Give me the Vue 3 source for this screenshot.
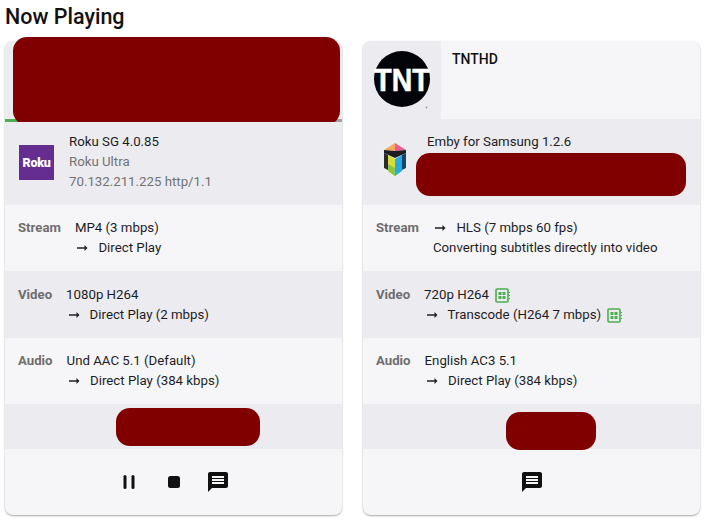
<script setup>
const cards = [
  {
    id: 'roku',
    rows: [
      { label: 'Stream', lines: [{ text: 'MP4 (3 mbps)' }, { arrow: true, text: 'Direct Play' }] },
      { label: 'Video', lines: [{ text: '1080p H264' }, { arrow: true, text: 'Direct Play (2 mbps)' }] },
      { label: 'Audio', lines: [{ text: 'Und AAC 5.1 (Default)' }, { arrow: true, text: 'Direct Play (384 kbps)' }] }
    ]
  },
  {
    id: 'emby',
    rows: [
      { label: 'Stream', lines: [{ arrow: true, text: 'HLS (7 mbps 60 fps)' }, { text: 'Converting subtitles directly into video' }] },
      { label: 'Video', lines: [{ text: '720p H264', chip: true }, { arrow: true, text: 'Transcode (H264 7 mbps)', chip: true }] },
      { label: 'Audio', lines: [{ text: 'English AC3 5.1' }, { arrow: true, text: 'Direct Play (384 kbps)' }] }
    ]
  }
]
</script>

<template>
  <div class="page">
    <h1 class="title">Now Playing</h1>
    <div class="grid">
      <div v-for="card in cards" :key="card.id" class="card">
        <template v-if="card.id === 'roku'">
          <div class="poster-wide"></div>
          <div class="progress"><div class="progress-fill"></div></div>
          <div class="redact redact-top"></div>
        </template>
        <div v-else class="head">
          <div class="poster">
            <svg width="56" height="62" viewBox="0 0 56 62">
              <circle cx="28" cy="28" r="28" fill="#03030a" />
              <text transform="translate(0.3 40) scale(1 1.07)" class="tnt">TNT</text>
              <circle cx="52.5" cy="56.5" r="0.9" fill="#999" />
            </svg>
          </div>
          <div class="channel">TNTHD</div>
        </div>

        <div class="device" :class="card.id">
          <div class="device-icon">
            <div v-if="card.id === 'roku'" class="roku-logo">Roku</div>
            <svg v-else width="26" height="36" viewBox="0 0 26 36">
              <polygon points="13,0 26,8 26,28 13,36 0,28 0,8" fill="#e9eef0" />
              <polygon points="13,1 13,9 2,8" fill="#f6a95a" />
              <polygon points="13,1 24,8 13,9" fill="#ee5c8e" />
              <polygon points="2,8 13,9 24,8 24,11 13,16 2,11" fill="#1d1d22" />
              <polygon points="2,11 6,13 6,28 2,26" fill="#2a2a30" />
              <polygon points="24,11 20,13 20,28 24,26" fill="#14466e" />
              <polygon points="6,13 13,17 13,34 6,29" fill="#d7de36" />
              <polygon points="6,22 13,26 13,34 6,29" fill="#8cc63f" />
              <polygon points="20,13 13,17 13,34 20,29" fill="#29abe2" />
            </svg>
          </div>
          <div class="device-text">
            <div v-if="card.id === 'roku'" class="line">Roku SG 4.0.85</div>
            <div v-else class="line">Emby for Samsung 1.2.6</div>
            <template v-if="card.id === 'roku'">
              <div class="line muted">Roku Ultra</div>
              <div class="line muted">70.132.211.225 http/1.1</div>
            </template>
          </div>
          <div v-if="card.id === 'emby'" class="redact redact-device"></div>
        </div>

        <div v-for="row in card.rows" :key="row.label" class="row">
          <div class="label">{{ row.label }}</div>
          <div class="value">
            <div v-for="line in row.lines" :key="line.text" class="line" :class="{ 'with-arrow': line.arrow }">
              <svg v-if="line.arrow" class="arrow" width="12" height="10" viewBox="0 0 12 10">
                <path d="M1 4.2h7.5V2l3 3-3 3V5.8H1z" fill="#222" />
              </svg>
              <span>{{ line.text }}</span>
              <svg v-if="line.chip" class="chip" width="15" height="15" viewBox="0 0 15 15">
                <rect x="1" y="1" width="12" height="13" rx="1" fill="none" stroke="#4caf50" stroke-width="1.6" />
                <path d="M3.5 4h3v3h-3zM7.5 4h3v3h-3zM3.5 8h3v3h-3zM7.5 8h3v3h-3z" fill="#4caf50" />
                <path d="M13.5 4.5H15M13.5 7.5H15M13.5 10.5H15" stroke="#4caf50" stroke-width="1" />
              </svg>
            </div>
          </div>
        </div>

        <div class="user">
          <div class="redact" :class="card.id === 'roku' ? 'redact-user-a' : 'redact-user-b'"></div>
        </div>

        <div class="controls">
          <template v-if="card.id === 'roku'">
            <button class="ctl">
              <svg width="24" height="24" viewBox="0 0 24 24" fill="#111">
                <rect x="6.5" y="5" width="3" height="14" rx="1.5" />
                <rect x="14.5" y="5" width="3" height="14" rx="1.5" />
              </svg>
            </button>
            <button class="ctl">
              <svg width="24" height="24" viewBox="0 0 24 24" fill="#111">
                <rect x="6" y="6" width="12" height="12" rx="2.5" />
              </svg>
            </button>
          </template>
          <button class="ctl">
            <svg width="24" height="24" viewBox="0 0 24 24" fill="#111">
              <path d="M20 2H4c-1.1 0-1.99.9-1.99 2L2 22l4-4h14c1.1 0 2-.9 2-2V4c0-1.1-.9-2-2-2zm-2 12H6v-2h12v2zm0-3H6V9h12v2zm0-3H6V6h12v2z" />
            </svg>
          </button>
        </div>
      </div>
    </div>
  </div>
</template>

<style scoped>
.page {
  width: 716px;
  height: 528px;
  padding: 5px 16px 0 5px;
  box-sizing: border-box;
  background: #fff;
  font-family: Roboto, "Liberation Sans", sans-serif;
  color: #1d1d1f;
  overflow: hidden;
}

.title {
  margin: 0 0 12px;
  font-size: 21.5px;
  line-height: 24px;
  font-weight: 500;
  color: #111;
}

.grid {
  display: grid;
  grid-template-columns: 337px 337px;
  column-gap: 21px;
}

.card {
  position: relative;
  height: 474px;
  display: flex;
  flex-direction: column;
  background: #f6f6f9;
  border-radius: 8px;
  box-shadow: 0 1px 2px rgba(0, 0, 0, 0.35);
}

.poster-wide {
  height: 78px;
  background: #ecebf0;
  border-radius: 8px 8px 0 0;
}

.progress {
  height: 3px;
  background: #a3a3a3;
}

.progress-fill {
  width: 60%;
  height: 100%;
  background: #4caf50;
}

.head {
  display: flex;
  height: 78px;
}

.poster {
  width: 78px;
  padding: 10px 11px 0;
  box-sizing: border-box;
  background: #ecebf0;
  border-radius: 8px 0 0 0;
}

.tnt {
  font-family: "Liberation Sans", sans-serif;
  font-size: 28.5px;
  font-weight: 700;
  fill: #fff;
  stroke: #fff;
  stroke-width: 0.5px;
}

.channel {
  padding: 9px 11px;
  font-size: 14px;
  line-height: 18px;
  font-weight: 500;
  color: #111;
}

.device {
  position: relative;
  display: flex;
  background: #ecebf0;
}

.device.roku {
  height: 83px;
  padding: 10px 0 0 14px;
  box-sizing: border-box;
}

.device.emby {
  height: 86px;
  padding: 13px 0 0 19px;
  box-sizing: border-box;
}

.device-icon {
  display: flex;
  align-items: center;
  height: 60px;
  margin-right: 15px;
}

.emby .device-icon {
  height: 56px;
  margin-right: 19px;
}

.roku-logo {
  width: 35px;
  height: 35px;
  background: #662d91;
  color: #fff;
  font-size: 12.5px;
  font-weight: 900;
  line-height: 35px;
  text-align: center;
  letter-spacing: -0.3px;
}

.line {
  display: flex;
  align-items: center;
  height: 20px;
  font-size: 13.25px;
  line-height: 20px;
}

.muted {
  color: #737373;
}

.row {
  display: flex;
  gap: 14px;
  height: 66px;
  padding: 13px 0 0 13px;
  box-sizing: border-box;
}

.row:nth-of-type(even) {
  height: 67px;
  padding-top: 14px;
  background: #ecebf0;
}

.label {
  font-size: 13.2px;
  line-height: 20px;
  font-weight: 700;
  color: #6e6e6e;
}

.with-arrow .arrow {
  margin: 0 10px 0 1.5px;
}

.chip {
  margin-left: 6px;
}

.user {
  height: 45px;
  background: #ecebf0;
}

.controls {
  flex: 1;
  display: flex;
  justify-content: center;
  align-items: center;
}

.ctl {
  width: 44.5px;
  height: 44px;
  padding: 0;
  display: flex;
  align-items: center;
  justify-content: center;
  background: none;
  border: none;
}

.redact {
  position: absolute;
  background: #800000;
}

.redact-top {
  left: 8px;
  top: -4px;
  width: 327px;
  height: 88px;
  border-radius: 14px;
}

.redact-device {
  left: 53px;
  top: 34px;
  width: 270px;
  height: 43px;
  border-radius: 14px;
}

.redact-user-a {
  left: 111px;
  top: 367px;
  width: 144px;
  height: 38px;
  border-radius: 14px;
}

.redact-user-b {
  left: 143px;
  top: 371px;
  width: 90px;
  height: 38px;
  border-radius: 14px;
}
</style>

<style>
html,
body {
  margin: 0;
  background: #fff;
}
</style>
